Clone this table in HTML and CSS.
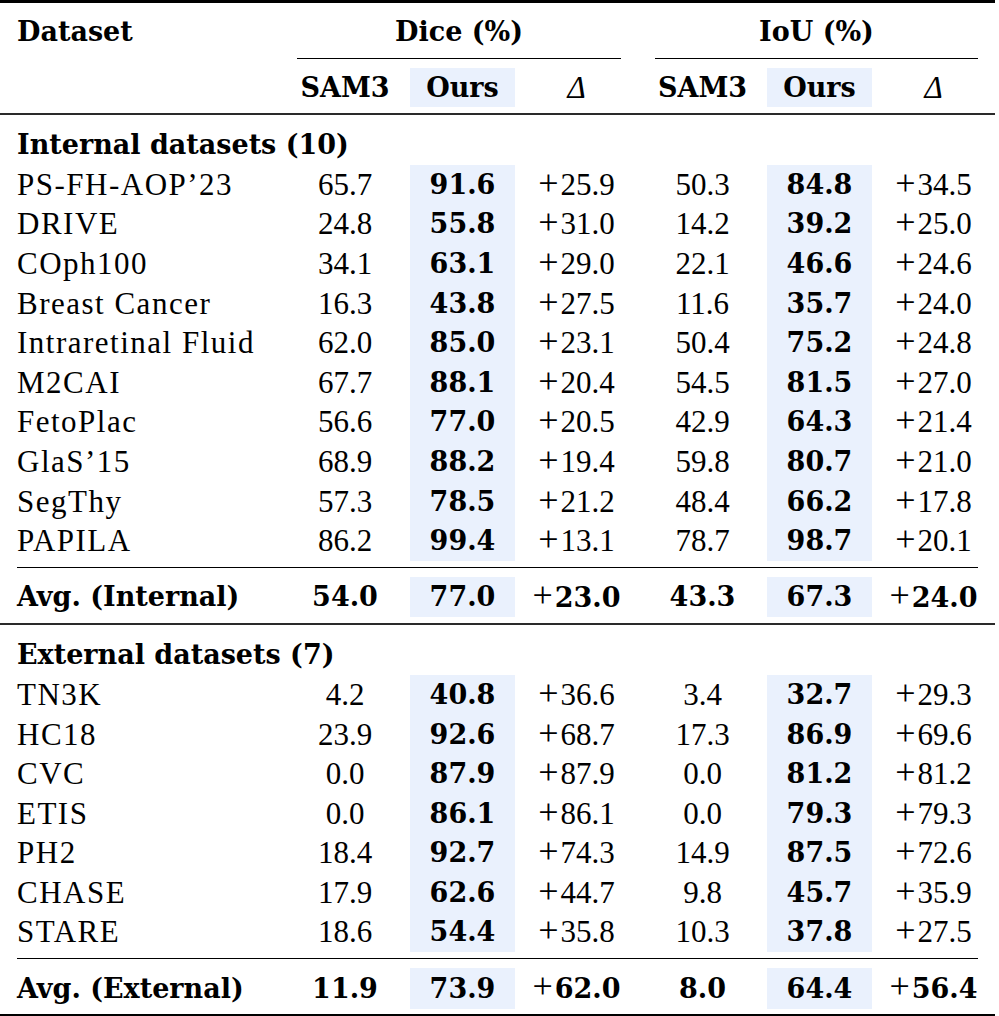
FILE: index.html
```html
<!DOCTYPE html>
<html>
<head>
<meta charset="utf-8">
<link rel="stylesheet" href="styles.css">
</head>
<body>
<table class="tbl">
  <colgroup>
    <col class="c1"><col class="c2"><col class="c3"><col class="c4"><col class="c5"><col class="c6"><col class="c7">
  </colgroup>
  <tr class="rule"><td colspan="7"><div class="r top"></div></td></tr>
  <tr class="row">
    <td class="name b">Dataset</td>
    <td colspan="3" class="b">Dice (%)</td>
    <td colspan="3" class="b">IoU (%)</td>
  </tr>
  <tr class="rule"><td></td><td colspan="3"><div class="r cmid"></div></td><td colspan="3"><div class="r cmid"></div></td></tr>
  <tr class="row">
    <td></td>
    <td class="b">SAM3</td><td class="b ours">Ours</td><td class="d">Δ</td>
    <td class="b">SAM3</td><td class="b ours">Ours</td><td class="d">Δ</td>
  </tr>
  <tr class="rule"><td colspan="7"><div class="r mid"></div></td></tr>

  <tr class="row"><td colspan="7" class="name b">Internal datasets (10)</td></tr>
  <tr class="row"><td class="name">PS-FH-AOP’23</td><td>65.7</td><td class="b ours">91.6</td><td><span class="p">+</span>25.9</td><td>50.3</td><td class="b ours">84.8</td><td><span class="p">+</span>34.5</td></tr>
  <tr class="row"><td class="name">DRIVE</td><td>24.8</td><td class="b ours">55.8</td><td><span class="p">+</span>31.0</td><td>14.2</td><td class="b ours">39.2</td><td><span class="p">+</span>25.0</td></tr>
  <tr class="row"><td class="name">COph100</td><td>34.1</td><td class="b ours">63.1</td><td><span class="p">+</span>29.0</td><td>22.1</td><td class="b ours">46.6</td><td><span class="p">+</span>24.6</td></tr>
  <tr class="row"><td class="name">Breast Cancer</td><td>16.3</td><td class="b ours">43.8</td><td><span class="p">+</span>27.5</td><td>11.6</td><td class="b ours">35.7</td><td><span class="p">+</span>24.0</td></tr>
  <tr class="row"><td class="name">Intraretinal Fluid</td><td>62.0</td><td class="b ours">85.0</td><td><span class="p">+</span>23.1</td><td>50.4</td><td class="b ours">75.2</td><td><span class="p">+</span>24.8</td></tr>
  <tr class="row"><td class="name">M2CAI</td><td>67.7</td><td class="b ours">88.1</td><td><span class="p">+</span>20.4</td><td>54.5</td><td class="b ours">81.5</td><td><span class="p">+</span>27.0</td></tr>
  <tr class="row"><td class="name">FetoPlac</td><td>56.6</td><td class="b ours">77.0</td><td><span class="p">+</span>20.5</td><td>42.9</td><td class="b ours">64.3</td><td><span class="p">+</span>21.4</td></tr>
  <tr class="row"><td class="name">GlaS’15</td><td>68.9</td><td class="b ours">88.2</td><td><span class="p">+</span>19.4</td><td>59.8</td><td class="b ours">80.7</td><td><span class="p">+</span>21.0</td></tr>
  <tr class="row"><td class="name">SegThy</td><td>57.3</td><td class="b ours">78.5</td><td><span class="p">+</span>21.2</td><td>48.4</td><td class="b ours">66.2</td><td><span class="p">+</span>17.8</td></tr>
  <tr class="row"><td class="name">PAPILA</td><td>86.2</td><td class="b ours">99.4</td><td><span class="p">+</span>13.1</td><td>78.7</td><td class="b ours">98.7</td><td><span class="p">+</span>20.1</td></tr>
  <tr class="rule"><td colspan="7"><div class="r cmid"></div></td></tr>
  <tr class="row"><td class="name b">Avg. (Internal)</td><td class="b">54.0</td><td class="b ours">77.0</td><td class="b"><span class="p">+</span>23.0</td><td class="b">43.3</td><td class="b ours">67.3</td><td class="b"><span class="p">+</span>24.0</td></tr>
  <tr class="rule"><td colspan="7"><div class="r mid"></div></td></tr>

  <tr class="row"><td colspan="7" class="name b">External datasets (7)</td></tr>
  <tr class="row"><td class="name">TN3K</td><td>4.2</td><td class="b ours">40.8</td><td><span class="p">+</span>36.6</td><td>3.4</td><td class="b ours">32.7</td><td><span class="p">+</span>29.3</td></tr>
  <tr class="row"><td class="name">HC18</td><td>23.9</td><td class="b ours">92.6</td><td><span class="p">+</span>68.7</td><td>17.3</td><td class="b ours">86.9</td><td><span class="p">+</span>69.6</td></tr>
  <tr class="row"><td class="name">CVC</td><td>0.0</td><td class="b ours">87.9</td><td><span class="p">+</span>87.9</td><td>0.0</td><td class="b ours">81.2</td><td><span class="p">+</span>81.2</td></tr>
  <tr class="row"><td class="name">ETIS</td><td>0.0</td><td class="b ours">86.1</td><td><span class="p">+</span>86.1</td><td>0.0</td><td class="b ours">79.3</td><td><span class="p">+</span>79.3</td></tr>
  <tr class="row"><td class="name">PH2</td><td>18.4</td><td class="b ours">92.7</td><td><span class="p">+</span>74.3</td><td>14.9</td><td class="b ours">87.5</td><td><span class="p">+</span>72.6</td></tr>
  <tr class="row"><td class="name">CHASE</td><td>17.9</td><td class="b ours">62.6</td><td><span class="p">+</span>44.7</td><td>9.8</td><td class="b ours">45.7</td><td><span class="p">+</span>35.9</td></tr>
  <tr class="row"><td class="name">STARE</td><td>18.6</td><td class="b ours">54.4</td><td><span class="p">+</span>35.8</td><td>10.3</td><td class="b ours">37.8</td><td><span class="p">+</span>27.5</td></tr>
  <tr class="rule"><td colspan="7"><div class="r cmid"></div></td></tr>
  <tr class="row"><td class="name b">Avg. (External)</td><td class="b">11.9</td><td class="b ours">73.9</td><td class="b"><span class="p">+</span>62.0</td><td class="b">8.0</td><td class="b ours">64.4</td><td class="b"><span class="p">+</span>56.4</td></tr>
  <tr class="rule"><td colspan="7"><div class="r bot"></div></td></tr>
</table>
</body>
</html>
```
FILE: styles.css
```css
html, body {
  margin: 0;
  padding: 0;
  background: #ffffff;
}

.tbl {
  width: 995px;
  border-collapse: collapse;
  border-spacing: 0;
  table-layout: fixed;
  font-family: "Liberation Serif", "Times New Roman", serif;
  font-size: 31px;
  color: #000;
}

.c1 { width: 280px; }
.c2 { width: 130px; }
.c3 { width: 105px; }
.c4 { width: 123px; }
.c5 { width: 129px; }
.c6 { width: 105px; }
.c7 { width: 123px; }

.tbl td {
  padding: 0;
  text-align: center;
  vertical-align: middle;
  white-space: nowrap;
}

.row td {
  height: 39.6px;
  line-height: 39.6px;
}

.tbl td.name {
  text-align: left;
  padding-left: 17px;
  letter-spacing: 1.5px;
}

.tbl td.b {
  font-family: "DejaVu Serif", serif;
  font-weight: bold;
  font-size: 27px;
  letter-spacing: 0;
}

.ours {
  background: #eaf1fd;
}

.d {
  font-style: italic;
}

.p {
  font-family: "Liberation Serif", serif;
  font-weight: normal;
  font-size: 36px;
  line-height: 1;
  margin-right: 2px;
}

.rule td {
  height: auto;
  line-height: 0;
}

.r {
  background: #000;
}

.r.top {
  height: 3px;
  margin: 0 0 9px 0;
}

.r.cmid {
  height: 1px;
  margin: 6px 17px 9px 17px;
}

.r.mid {
  height: 2px;
  background: #2a2a2a;
  margin: 6px 0 10px 0;
}

.r.bot {
  height: 3px;
  margin: 5px 0 0 0;
}
```
